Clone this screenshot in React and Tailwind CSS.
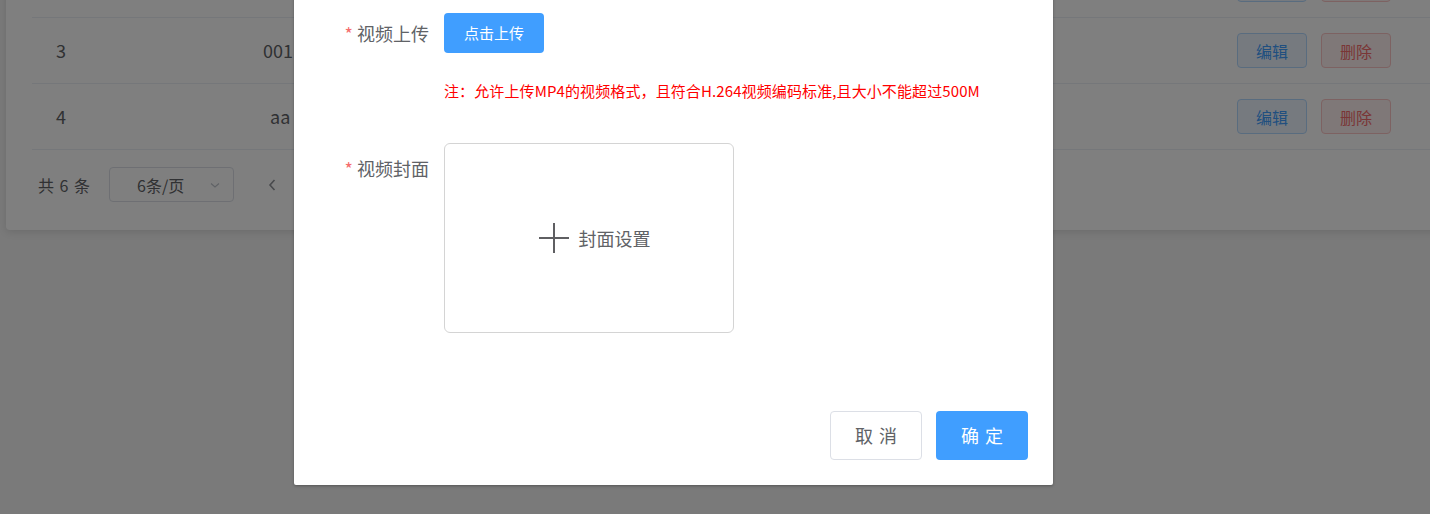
import React from "react";

function Btn({ kind, children }) {
  const cls =
    kind === "edit"
      ? "border-[#b3d8ff] bg-[#ecf5ff] text-[#409eff]"
      : "border-[#fbc4c4] bg-[#fef0f0] text-[#f56c6c]";
  return (
    <div
      className={
        "w-[70px] h-[35px] rounded-[4px] border flex items-center justify-center text-[16px] " +
        cls
      }
    >
      {children}
    </div>
  );
}

function Row({ idx, name, namePad, hideText }) {
  return (
    <div className="flex items-center h-[66px] border-b border-[#ebeef5] text-[#606266]">
      <div className="w-[231px] pl-[24px] text-[18px]">{idx}</div>
      <div className={"w-[974px] text-[18px] " + namePad}>{name}</div>
      <div className="flex gap-[14px]">
        <Btn kind="edit">{hideText ? "" : "编辑"}</Btn>
        <Btn kind="del">{hideText ? "" : "删除"}</Btn>
      </div>
    </div>
  );
}

export default function App() {
  return (
    <div
      className="relative w-full h-[514px] overflow-hidden bg-[#f4f4f4]"
      style={{ fontFamily: '"Noto Sans CJK SC", "Noto Sans", sans-serif' }}
    >
      {/* background card */}
      <div className="ml-[6px] mt-[-48px] w-[1440px] bg-white rounded-[4px] shadow-[0_2px_8px_rgba(0,0,0,0.12)]">
        <div className="ml-[26px]">
          <Row idx="" name="" namePad="pl-[7px]" hideText />
          <Row idx="3" name="001" namePad="pl-0" />
          <Row idx="4" name="aa" namePad="pl-[7px]" />
        </div>
        <div className="flex items-center pt-[17px] pb-[28px] pl-[32px] text-[#606266]">
          <span className="text-[16px] tracking-[1px]">共 6 条</span>
          <div className="ml-[18px] w-[125px] h-[35px] border border-[#dcdfe6] rounded-[4px] flex items-center pl-[27px] pr-[12px] text-[16px]">
            <span>6条/页</span>
            <svg className="ml-auto" width="12" height="12" viewBox="0 0 12 12" fill="none">
              <path d="M2 4.5 L6 8 L10 4.5" stroke="#c0c4cc" strokeWidth="1.2" />
            </svg>
          </div>
          <svg className="ml-[33px]" width="10" height="14" viewBox="0 0 10 14" fill="none">
            <path d="M7.5 2 L3 7 L7.5 12" stroke="#909399" strokeWidth="1.6" />
          </svg>
        </div>
      </div>

      {/* overlay */}
      <div className="absolute inset-0 bg-black/50" />

      {/* dialog */}
      <div className="absolute left-[294px] top-[-40px] w-[759px] h-[525px] bg-white rounded-[2px] shadow-[0_1px_3px_rgba(0,0,0,0.3)] flex flex-col">
        <div className="pt-[53px]">
          <div className="flex items-center h-[40px]">
            <div className="w-[150px] pr-[15px] text-right text-[18px] text-[#606266]">
              <span className="text-[#f56c6c] mr-[4px]">*</span>视频上传
            </div>
            <div className="w-[100px] h-[40px] rounded-[4px] bg-[#409eff] text-white text-[15px] flex items-center justify-center">
              点击上传
            </div>
          </div>
          <div className="mt-[28px] pl-[150px] text-[15px] leading-[20px] tracking-[0.11px] text-[#ff0000] whitespace-nowrap">
            注：允许上传MP4的视频格式，且符合H.264视频编码标准,且大小不能超过500M
          </div>
          <div className="mt-[42px] flex items-start">
            <div className="w-[150px] pr-[15px] pt-[5px] leading-[40px] text-right text-[18px] text-[#606266]">
              <span className="text-[#f56c6c] mr-[4px]">*</span>视频封面
            </div>
            <div className="w-[290px] h-[190px] border border-[#d4d4d4] rounded-[6px] flex items-center justify-center gap-[10px] pl-[11px]">
              <svg width="30" height="30" viewBox="0 0 30 30" fill="none">
                <path d="M0 15 H30 M15 0 V30" stroke="#5f5f62" strokeWidth="2" />
              </svg>
              <span className="text-[18px] text-[#606266]">封面设置</span>
            </div>
          </div>
        </div>
        <div className="mt-[78px] flex justify-end gap-[14px] pr-[25px]">
          <div className="w-[92px] h-[49px] rounded-[4px] border border-[#dcdfe6] bg-white text-[#606266] text-[18px] tracking-[6px] pl-[6px] flex items-center justify-center">
            取消
          </div>
          <div className="w-[92px] h-[49px] rounded-[4px] bg-[#409eff] text-white text-[18px] tracking-[6px] pl-[6px] flex items-center justify-center">
            确定
          </div>
        </div>
      </div>
    </div>
  );
}
